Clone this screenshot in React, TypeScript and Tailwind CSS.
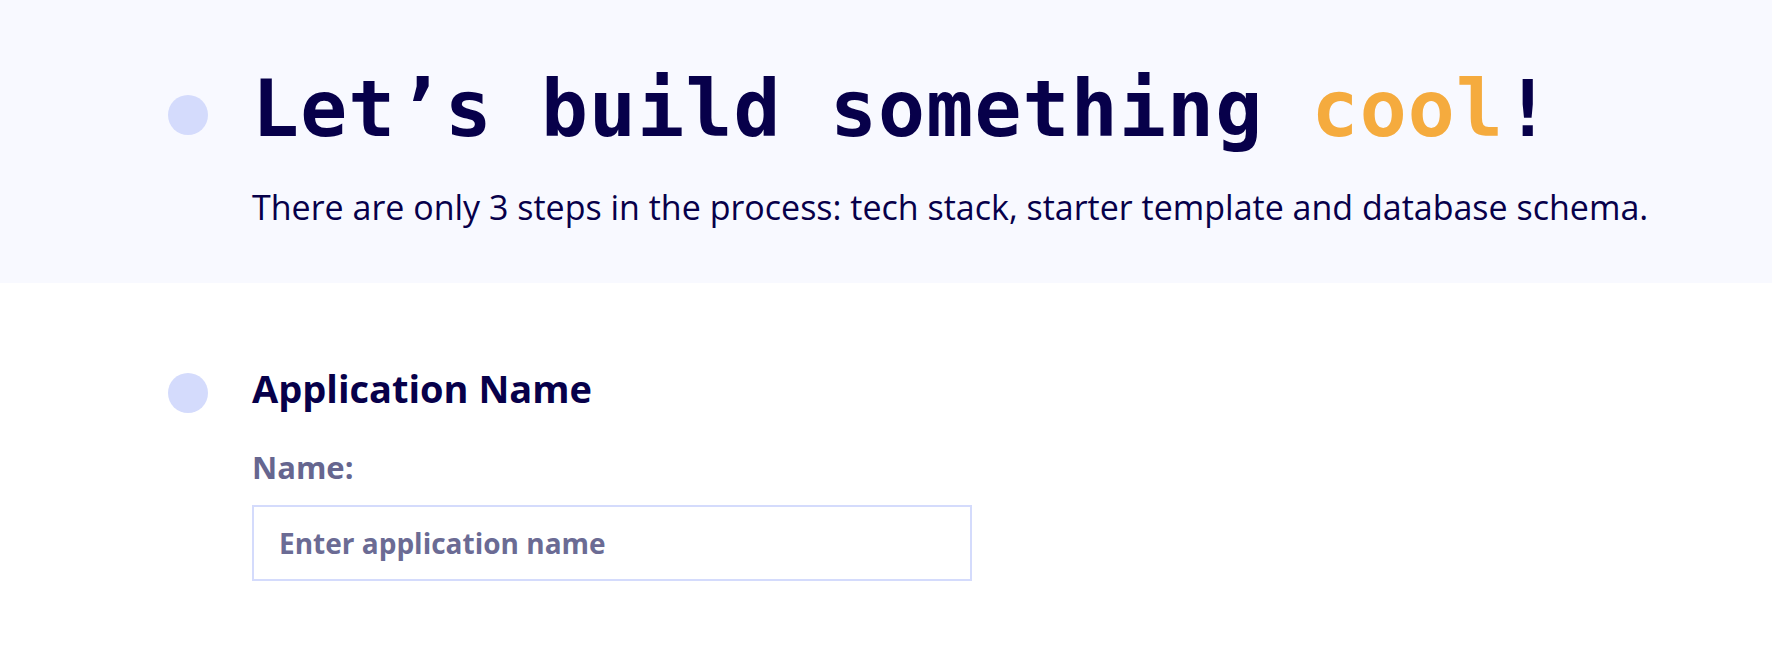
export default function App() {
  return (
    <div className="min-h-[648px] w-full bg-white font-['Open_Sans',sans-serif] text-[#07004a]">
      {/* intro band */}
      <section className="flex h-[283px] bg-[#f8f9ff] pl-[168px] pt-[69px]">
        <div className="mt-[26px] h-10 w-10 shrink-0 rounded-full bg-[#d4dbfc]" />
        <div className="ml-[44px] flex flex-col">
          <h1 className="font-['DejaVu_Sans_Mono',monospace] text-[78px] font-bold leading-[80px] tracking-[1.2px]">
            Let’s build something <span className="text-[#f5ab3e]">cool</span>!
          </h1>
          <p className="mt-[38px] text-[34px] leading-[40px]">
            There are only 3 steps in the process: tech stack, starter template and database schema.
          </p>
        </div>
      </section>

      {/* application name */}
      <section className="flex pl-[168px] pt-[83px]">
        <div className="mt-[7px] h-10 w-10 shrink-0 rounded-full bg-[#d4dbfc]" />
        <div className="ml-[44px] flex flex-col">
          <h2 className="text-[38px] font-bold leading-[44px]">Application Name</h2>
          <label className="mt-[39px] text-[31px] font-bold leading-[36px] text-[#66668f]">Name:</label>
          <input
            className="mt-[20px] h-[76px] w-[720px] border-2 border-[#d4dbfc] px-[25px] text-[28px] font-bold text-[#07004a] outline-none placeholder:text-[#6b6b94]"
            placeholder="Enter application name"
          />
        </div>
      </section>
    </div>
  )
}
